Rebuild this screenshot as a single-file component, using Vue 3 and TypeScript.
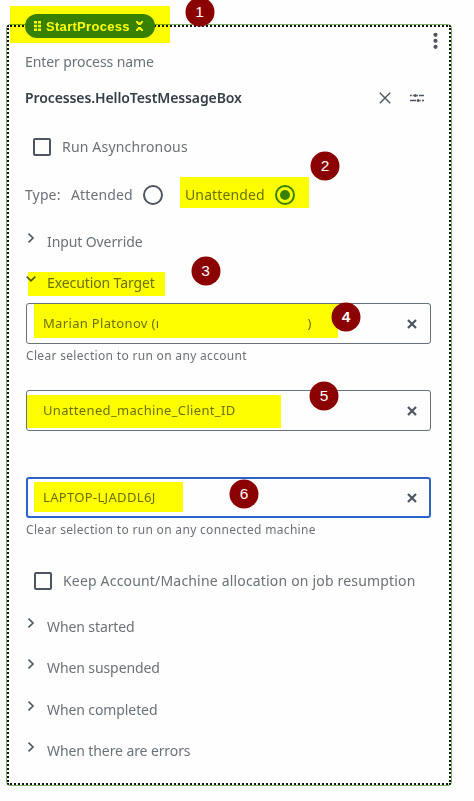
<script setup lang="ts">
import { ref } from 'vue'

interface TargetField {
  id: string
  value: string
  tail?: string
  hint?: string
}

interface Highlight {
  x: number
  y: number
  w: number
  h: number
}

interface Marker {
  n: number
  x: number
  y: number
  bold?: boolean
}

const runAsync = ref(false)
const keepAllocation = ref(false)
const runType = ref<'attended' | 'unattended'>('unattended')
const focusedField = ref('host')

const fields = ref<TargetField[]>([
  { id: 'account', value: 'Marian Platonov (ı', tail: ')', hint: 'Clear selection to run on any account' },
  { id: 'machine', value: 'Unattened_machine_Client_ID' },
  { id: 'host', value: 'LAPTOP-LJADDL6J', hint: 'Clear selection to run on any connected machine' },
])

const events = ['When started', 'When suspended', 'When completed', 'When there are errors']

const highlights: Highlight[] = [
  { x: 10, y: 6, w: 160, h: 37 },
  { x: 180, y: 177, w: 129, h: 31 },
  { x: 28, y: 272, w: 137, h: 23.5 },
  { x: 34, y: 304, w: 303.5, h: 33.5 },
  { x: 27, y: 394.5, w: 254, h: 33.5 },
  { x: 34, y: 482, w: 149, h: 30 },
]

const markers: Marker[] = [
  { n: 1, x: 199.5, y: 12 },
  { n: 2, x: 325, y: 165.5 },
  { n: 3, x: 205.5, y: 270.5 },
  { n: 4, x: 346, y: 317, bold: true },
  { n: 5, x: 324, y: 396 },
  { n: 6, x: 244, y: 494 },
]

function clearField(field: TargetField): void {
  field.value = ''
  field.tail = undefined
}
</script>

<template>
  <main class="page">
    <section class="card">
      <div class="card-body">
        <header class="card-header">
          <svg class="kebab" width="6" height="18" viewBox="0 0 6 18">
            <circle cx="3.5" cy="2.800" r="2.1" />
            <circle cx="3.5" cy="8.800" r="2.1" />
            <circle cx="3.5" cy="14.800" r="2.1" />
          </svg>
        </header>

        <div class="caption"><span>Enter process name</span></div>

        <div class="process-row">
          <strong class="process-name">Processes.HelloTestMessageBox</strong>
          <svg class="icon-close" width="12" height="12" viewBox="0 0 12 12">
            <path d="M.8.8l10.4 10.4M11.2.8L.8 11.2" />
          </svg>
          <svg class="icon-tune" width="14" height="8" viewBox="0 0 14 8">
            <path d="M0 1.5h1.8M2.800 1.500h1M7 1.500h1M9 1.500h5M0 6.500h6M10 6.500h.8M12 6.500h2" />
            <circle cx="5.4" cy="1.5" r="1.5" />
            <circle cx="8.2" cy="6.5" r="1.5" />
          </svg>
        </div>

        <div class="check-row" @click="runAsync = !runAsync">
          <span class="checkbox" :class="{ checked: runAsync }"></span>
          <span class="check-label">Run Asynchronous</span>
        </div>

        <div class="type-row">
          <span class="type-label">Type:</span>
          <span class="attended" @click="runType = 'attended'">Attended</span>
          <span class="radio" :class="{ selected: runType === 'attended' }"></span>
          <span class="unattended" @click="runType = 'unattended'">Unattended</span>
          <span class="radio" :class="{ selected: runType === 'unattended' }"></span>
        </div>

        <div class="section-row">
          <svg class="chevron" width="8" height="12" viewBox="0 0 8 12"><path d="M1.5 1.6L6 6l-4.5 4.4" /></svg>
          <span>Input Override</span>
        </div>

        <div class="section-row open">
          <svg class="chevron" width="10" height="8" viewBox="0 0 10 8"><path d="M.7 1.6L5 5.8l4.3-4.2" /></svg>
          <span>Execution Target</span>
        </div>

        <div v-for="field in fields" :key="field.id" class="field-group">
          <div class="field" :class="{ focused: focusedField === field.id }" @click="focusedField = field.id">
            <span>{{ field.value }}</span>
            <span v-if="field.tail" class="field-tail">{{ field.tail }}</span>
            <svg class="field-clear" width="10" height="10" viewBox="0 0 10 10" @click.stop="clearField(field)">
              <path d="M1 1l8 8M9 1L1 9" />
            </svg>
          </div>
          <p v-if="field.hint" class="hint">{{ field.hint }}</p>
        </div>

        <div class="check-row keep" @click="keepAllocation = !keepAllocation">
          <span class="checkbox" :class="{ checked: keepAllocation }"></span>
          <span class="check-label">Keep Account/Machine allocation on job resumption</span>
        </div>

        <div class="events">
          <div v-for="event in events" :key="event" class="section-row event">
            <svg class="chevron" width="8" height="12" viewBox="0 0 8 12"><path d="M1.5 1.6L6 6l-4.5 4.4" /></svg>
            <span>{{ event }}</span>
          </div>
        </div>
      </div>

      <!-- Activity chip sitting on the top border -->
      <div class="chip">
        <svg width="7" height="10" viewBox="0 0 7 10">
          <path d="M0 0h3v2.4H0zM4 0h3v2.4H4zM0 3.8h3v2.4H0zM4 3.8h3v2.4H4zM0 7.6h3V10H0zM4 7.6h3V10H4z" />
        </svg>
        <span class="chip-label">StartProcess</span>
        <svg width="7" height="10" viewBox="0 0 7 10">
          <path d="M0 0h2v1.200h3V0h2v1.200L4.600 4h-2.200L0 1.200zM0 10h2V8.800h3V10h2V8.800L4.600 6h-2.200L0 8.800z" />
        </svg>
      </div>
    </section>

    <!-- Marker-pen highlights and step numbers -->
    <div
      v-for="(h, i) in highlights"
      :key="`h${i}`"
      class="highlight"
      :style="{ left: `${h.x}px`, top: `${h.y}px`, width: `${h.w}px`, height: `${h.h}px` }"
    ></div>
    <div
      v-for="m in markers"
      :key="m.n"
      class="marker"
      :class="{ bold: m.bold }"
      :style="{ left: `${m.x}px`, top: `${m.y}px` }"
    >
      {{ m.n }}
    </div>
  </main>
</template>

<style>
body {
  background: #fefefe;
}
</style>

<style scoped>
.page {
  --text: #6a7178;
  --ink: #4c5560;
  --green: #38800b;

  position: relative;
  box-sizing: border-box;
  height: 801px;
  padding: 24px 0 0 6px;
  overflow: hidden;
  background: #fefefe;
  color: var(--text);
  font-family: 'Noto Sans', sans-serif;
  font-size: 14px;
  line-height: 20px;
  white-space: nowrap;
}

.card {
  position: relative;
  box-sizing: border-box;
  width: 446px;
  height: 762px;
  border: 1px solid #78ae65;
  border-radius: 4px;
}

.card-body {
  box-sizing: border-box;
  height: 100%;
  padding: 0 18px 0 16px;
  border: 2px dotted #111;
  border-radius: 2px;
}

.card-header {
  display: flex;
  align-items: center;
  justify-content: flex-end;
  height: 27px;
  margin-right: -7px;
}

.kebab {
  fill: var(--ink);
}

.caption {
  display: flex;
  align-items: center;
  height: 16px;
  letter-spacing: -0.1px;
}

.process-row {
  display: flex;
  align-items: center;
  height: 56px;
  padding-right: 7px;
}

.process-name {
  flex: 1;
  color: #353d47;
  font-weight: 600;
  letter-spacing: -0.1px;
}

.icon-close {
  margin-right: 19px;
  fill: none;
  stroke: var(--ink);
  stroke-width: 1.4;
}

.icon-tune {
  fill: var(--ink);
  stroke: var(--ink);
  stroke-width: 1.4;
}

.icon-tune circle {
  stroke: none;
}

.check-row {
  display: flex;
  align-items: center;
  gap: 11px;
  height: 42px;
  padding-left: 8px;
  letter-spacing: 0.18px;
}

.check-row.keep {
  height: 34px;
  padding-left: 9px;
}

.checkbox {
  box-sizing: border-box;
  width: 18px;
  height: 18px;
  border: 2px solid var(--ink);
  border-radius: 2px;
}

.checkbox.checked {
  background: var(--green);
}

.type-row {
  display: flex;
  align-items: center;
  height: 54px;
  letter-spacing: 0.12px;
}

.type-label {
  width: 46px;
}

.attended {
  width: 72px;
}

.unattended {
  width: 90px;
  margin-left: 22px;
}

.radio {
  display: flex;
  align-items: center;
  justify-content: center;
  box-sizing: border-box;
  width: 20px;
  height: 20px;
  border: 2px solid var(--ink);
  border-radius: 50%;
}

.radio.selected {
  border-color: var(--green);
}

.radio.selected::after {
  width: 10px;
  height: 10px;
  border-radius: 50%;
  background: var(--green);
  content: '';
}

.section-row {
  display: flex;
  align-items: center;
  gap: 12px;
  height: 40px;
  padding-left: 2px;
  letter-spacing: -0.1px;
}

.section-row.open {
  gap: 11px;
  height: 41px;
  padding-left: 1px;
}

.chevron {
  margin-bottom: 8px;
  fill: none;
  stroke: var(--ink);
  stroke-width: 1.6;
}

.field-group {
  height: 87px;
  margin-left: 1px;
}

.field {
  display: flex;
  align-items: center;
  box-sizing: border-box;
  height: 41px;
  padding: 0 13px 0 16px;
  border: 1px solid #68707a;
  border-radius: 3px;
  font-size: 13px;
  letter-spacing: 0.33px;
}

.field > span {
  margin-top: -2px;
}

.field.focused {
  padding: 0 12px 0 15px;
  border: 2px solid #2c62c9;
}

.field > .field-tail {
  margin-left: 148px;
}

.field-clear {
  margin-left: auto;
  fill: none;
  stroke: var(--ink);
  stroke-width: 2.2;
}

.hint {
  margin: 2px 0 0;
  font-size: 12px;
  letter-spacing: 0.32px;
}

.events {
  padding-top: 8px;
}

.section-row.event {
  height: 41.5px;
}

.chip {
  position: absolute;
  top: -11px;
  left: 18px;
  display: flex;
  align-items: center;
  box-sizing: border-box;
  width: 130px;
  height: 24px;
  padding: 0 12px 0 9px;
  border-radius: 12px;
  background: var(--green);
  color: #fff;
  font: bold 13px 'Liberation Sans', sans-serif;
  letter-spacing: 0.3px;
}

.chip svg {
  fill: #fff;
}

.chip-label {
  flex: 1;
  margin-left: 5px;
}

.highlight {
  position: absolute;
  background: #ff0;
  mix-blend-mode: multiply;
  pointer-events: none;
}

.marker {
  position: absolute;
  width: 29px;
  height: 29px;
  border-radius: 50%;
  background: #8b0000;
  color: #fff;
  font: 15.5px/28px 'Liberation Sans', sans-serif;
  text-align: center;
  transform: translate(-50%, -50%);
}

.marker.bold {
  font-weight: bold;
}
</style>
